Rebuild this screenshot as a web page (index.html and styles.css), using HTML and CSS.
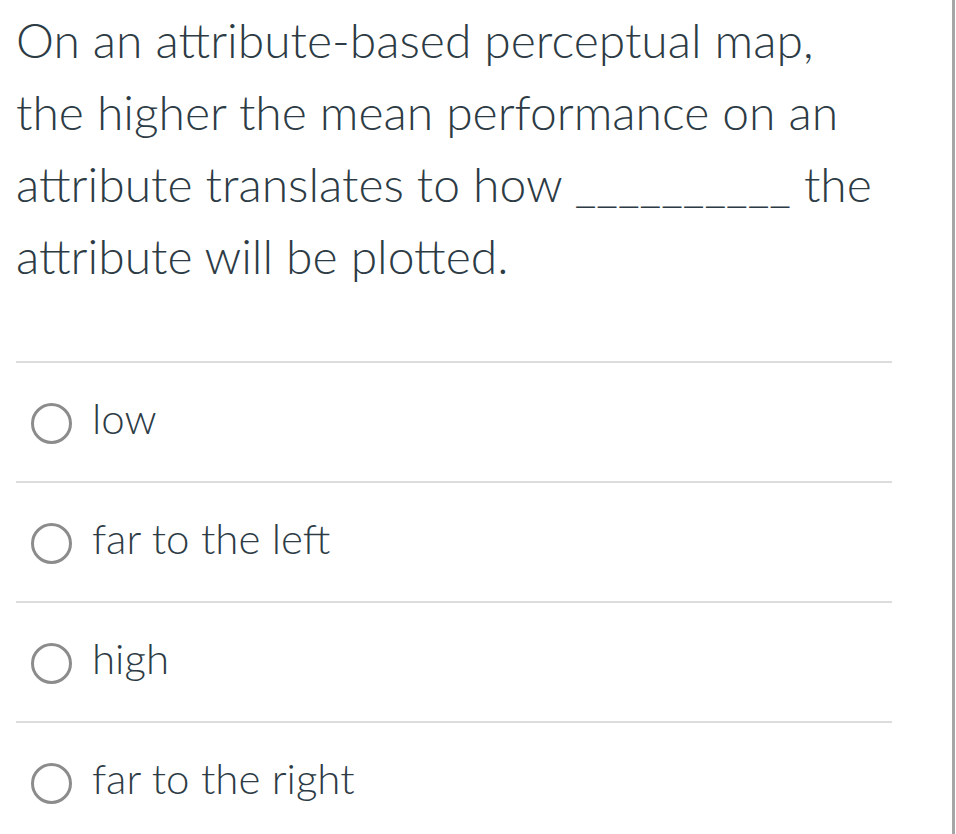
FILE: index.html
```html
<!DOCTYPE html>
<html lang="en">
<head>
<meta charset="utf-8">
<title>Question</title>
<link rel="stylesheet" href="styles.css">
</head>
<body>
<div class="page">
  <div class="content">
    <div class="question">On an attribute-based perceptual map,<br>the higher the mean performance on an<br>attribute translates to how __________ the<br>attribute will be plotted.</div>
    <div class="answers">
      <label class="answer"><span class="radio"></span><span class="label">low</span></label>
      <label class="answer"><span class="radio"></span><span class="label">far to the left</span></label>
      <label class="answer"><span class="radio"></span><span class="label">high</span></label>
      <label class="answer"><span class="radio"></span><span class="label">far to the right</span></label>
    </div>
  </div>
  <div class="edge"></div>
</div>
</body>
</html>
```
FILE: styles.css
```css
html, body {
  margin: 0;
  padding: 0;
  background: #ffffff;
  overflow: hidden;
}
.page {
  display: flex;
  width: 956px;
  height: 834px;
  overflow: hidden;
}
.content {
  flex: 1;
  padding-left: 16px;
  font-family: "Lato", "Liberation Sans", sans-serif;
  font-weight: 300;
  color: #2d3b45;
}
.question {
  width: 876px;
  font-size: 48px;
  line-height: 72px;
  padding-top: 4px;
  height: 361px;
  box-sizing: border-box;
}
.answers {
  width: 876px;
}
.answer {
  display: flex;
  align-items: center;
  height: 120px;
  border-top: 2px solid #dcdcdc;
  box-sizing: border-box;
}
.radio {
  width: 35px;
  height: 35px;
  border: 3px solid #8c8c8c;
  border-radius: 50%;
  margin-left: 15px;
  margin-right: 20px;
  flex: none;
  margin-top: 2px;
}
.label {
  font-size: 42px;
  line-height: 56px;
  padding-bottom: 8px;
}
.edge {
  width: 3px;
  margin-right: 1px;
  background: #a6a6a6;
  flex: none;
}
```
